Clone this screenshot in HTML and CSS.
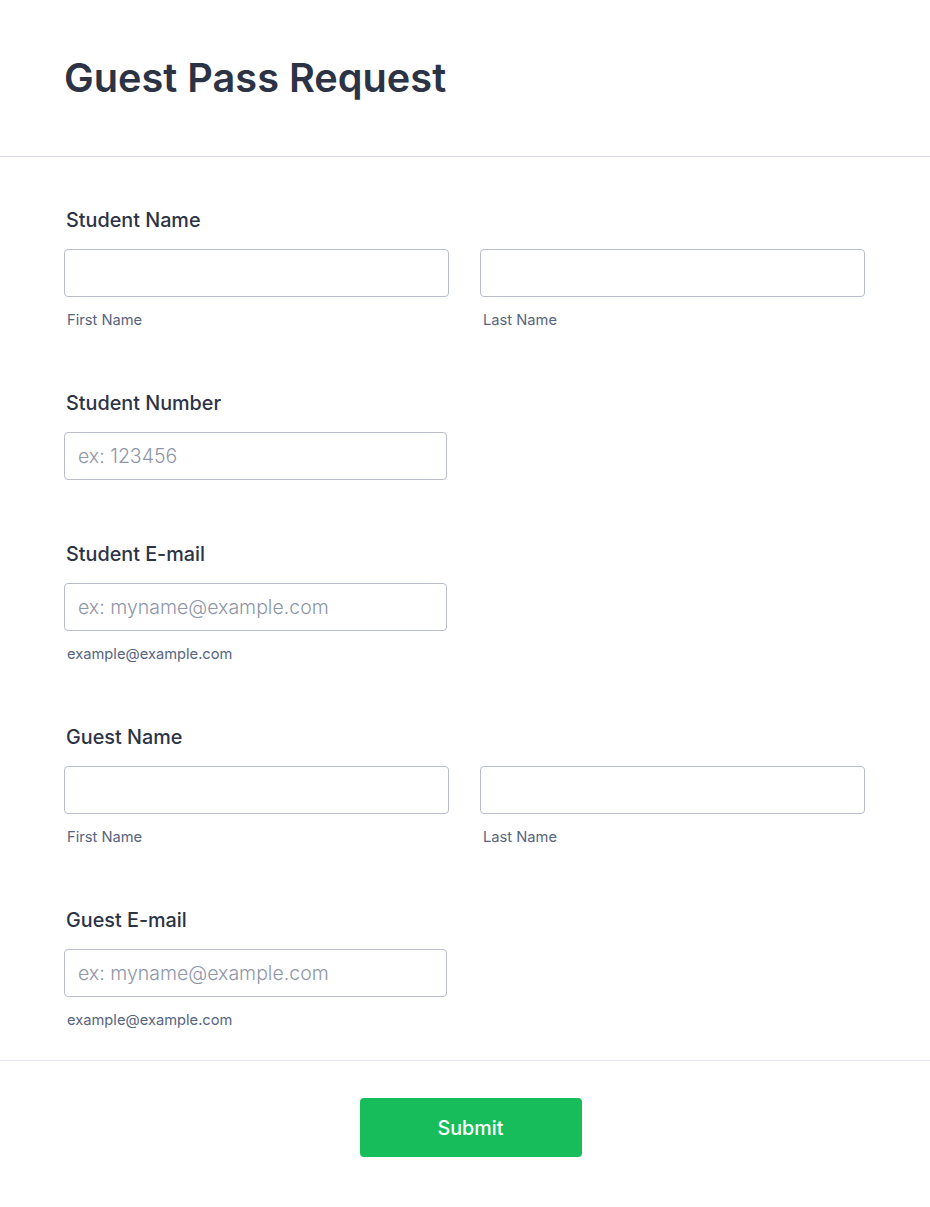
FILE: index.html
```html
<!DOCTYPE html>
<html lang="en">
<head>
    <meta charset="UTF-8">
    <meta name="viewport" content="width=device-width, initial-scale=1.0">
    <title>Guest Pass Request</title>
    <link rel="stylesheet" href="styles.css">
</head>
<body>
    <div class="header">
        <h1>Guest Pass Request</h1>
    </div>

    <form class="form">
        <div class="field">
            <label class="label">Student Name</label>
            <div class="pair">
                <div class="col">
                    <input type="text">
                    <div class="sub">First Name</div>
                </div>
                <div class="col">
                    <input type="text">
                    <div class="sub">Last Name</div>
                </div>
            </div>
        </div>

        <div class="field nosub">
            <label class="label">Student Number</label>
            <input class="single" type="text" placeholder="ex: 123456">
        </div>

        <div class="field">
            <label class="label">Student E-mail</label>
            <input class="single" type="text" placeholder="ex: myname@example.com">
            <div class="sub">example@example.com</div>
        </div>

        <div class="field">
            <label class="label">Guest Name</label>
            <div class="pair">
                <div class="col">
                    <input type="text">
                    <div class="sub">First Name</div>
                </div>
                <div class="col">
                    <input type="text">
                    <div class="sub">Last Name</div>
                </div>
            </div>
        </div>

        <div class="field last">
            <label class="label">Guest E-mail</label>
            <input class="single" type="text" placeholder="ex: myname@example.com">
            <div class="sub">example@example.com</div>
        </div>

        <div class="actions">
            <button type="button">Submit</button>
        </div>
    </form>
</body>
</html>
```

FILE: styles.css
```css
body {
    margin: 0;
    font-family: Inter, "Noto Sans", sans-serif;
    color: #2c3345;
    background: #fff;
}

.header {
    padding: 54px 64px 54px 64px;
    border-bottom: 1px solid #d8dae5;
}

.header h1 {
    margin: 0;
    font-size: 39.7px;
    line-height: 48px;
    font-weight: 600;
    color: #2c3345;
}

.form {
    padding-top: 48px;
}

.field {
    padding: 0 64px 58px 64px;
}

.field.nosub {
    padding-bottom: 59px;
}

.field.last {
    padding-bottom: 30px;
}

.label {
    display: block;
    font-size: 19.8px;
    line-height: 30px;
    font-weight: 500;
    margin-left: 2px;
    margin-bottom: 14px;
}

.pair {
    display: flex;
    gap: 31px;
    width: 801px;
}

.col {
    flex: 1;
}

input {
    display: block;
    box-sizing: border-box;
    width: 100%;
    height: 48px;
    border: 1px solid #b8bdc9;
    border-radius: 4px;
    padding: 0 13px;
    font-family: Inter, "Noto Sans", sans-serif;
    font-size: 19.5px;
    font-weight: 300;
    color: #2c3345;
    background: #fff;
}

input.single {
    width: 383px;
}

input::placeholder {
    color: #8f96a8;
}

.sub {
    margin-top: 13px;
    margin-left: 3px;
    font-size: 14.7px;
    line-height: 20px;
    color: #57647e;
}

.actions {
    border-top: 1px solid #e6e6ef;
    padding: 37px 0 50px 0;
    text-align: center;
}

.actions button {
    width: 222px;
    height: 59px;
    border: none;
    border-radius: 4px;
    background: #18bd5b;
    color: #fff;
    font-family: Inter, "Noto Sans", sans-serif;
    font-size: 19.7px;
    font-weight: 500;
    margin-left: 11px;
    padding-top: 2px;
}
```
